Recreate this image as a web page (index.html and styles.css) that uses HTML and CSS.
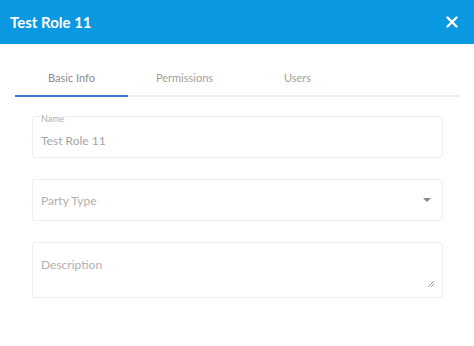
FILE: index.html
```html
<!DOCTYPE html>
<html lang="en">
<head>
  <meta charset="UTF-8" />
  <meta name="viewport" content="width=device-width, initial-scale=1" />
  <title>Test Role 11</title>
  <link rel="stylesheet" href="styles.css">
</head>
<body>
  <div class="modal-header">
    <h1>Test Role 11</h1>
    <span class="close">
      <svg width="12" height="12" viewBox="0 0 12 12">
        <path d="M1.5 1.5 L10.5 10.5 M10.5 1.5 L1.5 10.5" stroke="#fff" stroke-width="2.4" stroke-linecap="round" />
      </svg>
    </span>
  </div>

  <div class="tabs">
    <div class="tab active">Basic Info</div>
    <div class="tab">Permissions</div>
    <div class="tab">Users</div>
  </div>

  <div class="form">
    <div class="field">
      <label class="float-label">Name</label>
      <div class="value">Test Role 11</div>
    </div>

    <div class="field select">
      <div class="placeholder">Party Type</div>
      <span class="caret"></span>
    </div>

    <div class="field textarea">
      <div class="placeholder">Description</div>
      <svg class="resize" width="8" height="8" viewBox="0 0 8 8">
        <path d="M1 7 L7 1 M4 7 L7 4" stroke="#999" stroke-width="1" />
      </svg>
    </div>
  </div>
</body>
</html>
```

FILE: styles.css
```css
body {
  margin: 0;
  font-family: Lato, 'Open Sans', sans-serif;
  background: #fff;
  color: #999;
}

.modal-header {
  height: 44px;
  background: #0a99e1;
  display: flex;
  align-items: center;
  justify-content: space-between;
  padding: 0 16px 0 10px;
}

.modal-header h1 {
  margin: 0;
  font-size: 15px;
  font-weight: 700;
  color: #fff;
}

.close {
  display: flex;
}

.tabs {
  display: flex;
  margin: 18px 14px 0 15px;
  border-bottom: 2px solid #eee;
}

.tab {
  width: 113px;
  text-align: center;
  font-size: 11px;
  color: #a0a0a0;
  padding: 9px 0 11px;
  margin-bottom: -2px;
  border-bottom: 2px solid transparent;
}

.tab.active {
  color: #8c8c8c;
  border-bottom-color: #3a7fd0;
}

.form {
  padding: 19px 31px 0 32px;
  display: flex;
  flex-direction: column;
  gap: 21px;
}

.field {
  position: relative;
  border: 1px solid #eee;
  border-radius: 3px;
  height: 40px;
  display: flex;
  align-items: center;
  padding: 0 8px;
  font-size: 12px;
  color: #b0b0b0;
}

.float-label {
  position: absolute;
  top: -3px;
  left: 7px;
  font-size: 9px;
  color: #b0b0b0;
  background: #fff;
  padding: 0 1px;
  line-height: 10px;
}

.value {
  padding-top: 6px;
  color: #a5a5a5;
}

.select .placeholder {
  flex: 1;
}

.caret {
  width: 0;
  height: 0;
  border-left: 4px solid transparent;
  border-right: 4px solid transparent;
  border-top: 4px solid #888;
  margin-right: 3px;
}

.textarea {
  height: 54px;
  align-items: flex-start;
}

.textarea .placeholder {
  padding-top: 14px;
}

.resize {
  position: absolute;
  right: 7px;
  bottom: 9px;
}
```
